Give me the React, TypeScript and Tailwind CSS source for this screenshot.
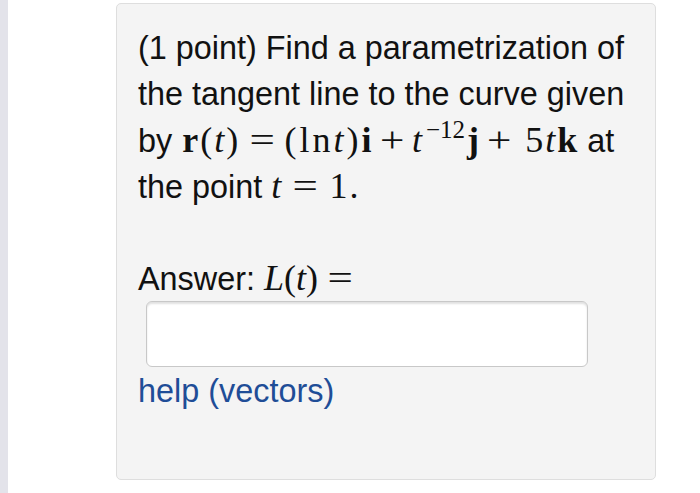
import React from "react";

const M: React.FC<{ children: React.ReactNode; className?: string }> = ({ children, className }) => (
  <span className={"font-['Liberation_Serif',serif] text-[36px] " + (className ?? "")}>{children}</span>
);

const Eq = ({ cls = "mx-[12px]" }: { cls?: string }) => (
  <span className={"inline-block scale-x-[1.25] " + cls}>=</span>
);
const Plus = ({ r = "mr-[10px]" }: { r?: string }) => (
  <span className={"ml-[10px] inline-block scale-x-[1.2] " + r}>+</span>
);

export default function App() {
  return (
    <div className="flex min-h-[493px] w-[700px] bg-white font-['Liberation_Sans',Arial,sans-serif] text-[#111]">
      <div className="w-[8px] bg-[#e3e3ea]" />
      <div className="ml-[108px] mt-[3px] h-[477px] w-[540px] rounded-[5px] border border-[#dedede] bg-[#f4f4f4] px-[21px] pt-[21px] text-[32.4px] leading-[46px]">
        <div className="h-[46px] whitespace-nowrap">(1 point) Find a parametrization of</div>
        <div className="h-[46px] whitespace-nowrap">the tangent line to the curve given</div>
        <div className="h-[46px] whitespace-nowrap">
          by{" "}
          <M>
            <b className="ml-[1px] tracking-[2px]">r</b>
            <span className="tracking-[2px]">(<i>t</i>)</span>
            <Eq />
            <span className="tracking-[3px]">(ln<i>t</i>)</span>
            <b>i</b>
            <Plus />
            <i>t</i>
            <span className="relative top-[-14px] ml-[4px] mr-[2px] text-[25px]">−12</span>
            <b>j</b>
            <Plus r="mr-[16px]" />
            <span className="tracking-[2px]">5<i>t</i></span>
            <b>k</b>
          </M>
          <span className="ml-[10px]">at</span>
        </div>
        <div className="h-[46px] whitespace-nowrap">
          the point{" "}
          <M>
            <i>t</i>
            <Eq cls="ml-[14px] mr-[14px]" />
            <span className="tracking-[2px]">1.</span>
          </M>
        </div>
        <div className="h-[46px]" />
        <div className="h-[46px] whitespace-nowrap">
          Answer:{" "}
          <M>
            <i>L</i>(<i>t</i>)<Eq />
          </M>
        </div>
        <div className="ml-[8px] h-[66px] w-[442px] rounded-[6px] border border-[#c8c8c8] bg-white shadow-[inset_0_2px_2px_rgba(0,0,0,0.12)]" />
        <div className="mt-[1px] h-[46px] whitespace-nowrap text-[#1f4d97]">help (vectors)</div>
      </div>
    </div>
  );
}
